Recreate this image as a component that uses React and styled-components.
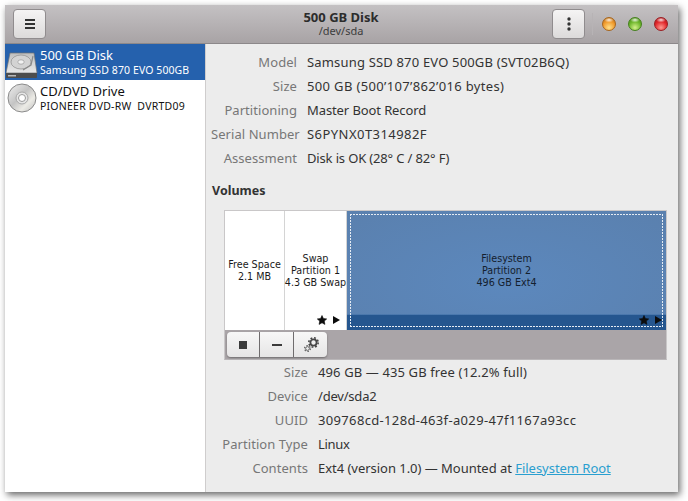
import React from "react";
import styled, { createGlobalStyle } from "styled-components";

const GlobalStyle = createGlobalStyle`
  html, body {
    margin: 0;
    padding: 0;
    background: #fff;
    width: 688px;
    height: 501px;
    overflow: hidden;
  }
  * { box-sizing: border-box; }
`;

const Page = styled.div`
  width: 688px;
  height: 501px;
  padding: 5px 10px 9px 5px;
  font-family: "Noto Sans", "Open Sans", sans-serif;
`;

const Window = styled.div`
  width: 673px;
  height: 487px;
  display: flex;
  flex-direction: column;
  background: #ececec;
  box-shadow: 2px 3px 7px rgba(0, 0, 0, 0.6);
`;

const TitleBar = styled.div`
  height: 39px;
  flex: none;
  display: flex;
  align-items: center;
  padding: 0 10px 1px 8px;
  background: linear-gradient(#c4c1c3, #a8a3a5);
  border-bottom: 1px solid #8c888a;
`;

const ToolButton = styled.div`
  width: 33px;
  height: 30px;
  flex: none;
  display: flex;
  align-items: center;
  justify-content: center;
  background: linear-gradient(#f5f4f4, #dcdada);
  border: 1px solid #908c8e;
  border-radius: 4px;
`;

const Title = styled.div`
  flex: 1;
  display: flex;
  flex-direction: column;
  align-items: center;
  padding-left: 84px;
  color: #2c2c2c;
`;

const TitleMain = styled.div`
  font-size: 13px;
  line-height: 14px;
  font-weight: 700;
`;

const TitleSub = styled.div`
  font-size: 11px;
  line-height: 13px;
  color: #3c3c3c;
`;

const Separator = styled.div`
  width: 1px;
  height: 22px;
  margin: 0 9px 0 7px;
  background: #b7b3b5;
`;

const Lights = styled.div`
  display: flex;
  gap: 12px;
`;

const Light = styled.div`
  width: 14px;
  height: 14px;
  border-radius: 50%;
  border: 1px solid ${(p) => p.$edge};
  background:
    radial-gradient(ellipse 40% 22% at 50% 16%, rgba(255, 255, 255, 0.85), transparent),
    radial-gradient(
      circle at 50% 80%,
      ${(p) => p.$glow} 0%,
      ${(p) => p.$color} 55%,
      ${(p) => p.$edge} 100%
    );
`;

const Body = styled.div`
  flex: 1;
  display: flex;
  min-height: 0;
`;

const Sidebar = styled.div`
  width: 201px;
  flex: none;
  background: #fff;
  border-right: 1px solid #cfcdcd;
`;

const DriveRow = styled.div`
  height: 36px;
  display: flex;
  align-items: center;
  gap: 2px;
  padding-left: 1px;
  background: ${(p) => (p.$selected ? "#2561ad" : "#fff")};
  color: ${(p) => (p.$selected ? "#fff" : "#111")};
`;

const DriveIcon = styled.svg`
  width: 32px;
  height: 32px;
  flex: none;
`;

const DriveText = styled.div`
  display: flex;
  flex-direction: column;
  white-space: pre;
`;

const DriveName = styled.div`
  font-size: 13px;
  line-height: 16px;
`;

const DriveModel = styled.div`
  font-size: 10.5px;
  line-height: 14px;
  letter-spacing: ${(p) => p.$track}px;
`;

const Content = styled.div`
  flex: 1;
  padding: 6px 12px 0 5px;
`;

const Info = styled.div`
  display: grid;
  grid-template-columns: ${(p) => p.$label}px 1fr;
  column-gap: 10px;
  grid-auto-rows: 24px;
  align-items: center;
  font-size: 13px;
  color: #333;
`;

const Label = styled.div`
  text-align: right;
  color: #777;
  white-space: nowrap;
  letter-spacing: 0.06px;
`;

const Value = styled.div`
  white-space: nowrap;
  letter-spacing: ${(p) => p.$track}px;
`;

const Link = styled.a`
  color: #2a9fd0;
  text-decoration: underline;
`;

const Heading = styled.div`
  margin: 12px 0 10px 1px;
  font-size: 12.5px;
  line-height: 18px;
  font-weight: 700;
  color: #333;
`;

const VolumeBox = styled.div`
  margin: 0 0 0 13px;
  width: 443px;
  height: 150px;
  display: flex;
  flex-direction: column;
  background: #aaa5a8;
  border: 1px solid #c9c7c8;
  border-bottom-color: #b9b6b8;
`;

const Partitions = styled.div`
  height: 119px;
  flex: none;
  display: flex;
  background: #fff;
`;

const Partition = styled.div`
  position: relative;
  width: ${(p) => p.$width}px;
  flex: none;
  display: flex;
  align-items: center;
  justify-content: center;
  text-align: center;
  font-family: "DejaVu Sans", sans-serif;
  font-size: 9.6px;
  line-height: 12px;
  white-space: nowrap;
  color: #1a1a1a;
  border-right: 1px solid #d4d4d4;
`;

const Selected = styled(Partition)`
  border-right: 0;
  background:
    linear-gradient(to top, #25568f 15px, #3a6ca5 15px, transparent 16px),
    radial-gradient(ellipse at 50% 60%, #5c88bd, #5a80ae);
  color: #14202e;
`;

const Focus = styled.div`
  position: absolute;
  inset: 3px;
  --dash-h: repeating-linear-gradient(90deg, #e6ecf3 0 2px, transparent 2px 3px);
  --dash-v: repeating-linear-gradient(0deg, #e6ecf3 0 2px, transparent 2px 3px);
  background:
    var(--dash-h) top / 100% 1px no-repeat,
    var(--dash-h) bottom / 100% 1px no-repeat,
    var(--dash-v) left / 1px 100% no-repeat,
    var(--dash-v) right / 1px 100% no-repeat;
`;

const Marks = styled.div`
  position: absolute;
  right: ${(p) => p.$right}px;
  bottom: 5px;
  display: flex;
  align-items: center;
  gap: 6px;
`;

const Mark = styled.svg`
  display: block;
  width: ${(p) => p.$size}px;
  height: 10px;
  fill: #0c0c0c;
`;

const VolumeBar = styled.div`
  flex: 1;
  display: flex;
  align-items: center;
  padding-left: 2px;
`;

const ActionGroup = styled.div`
  height: 25px;
  display: flex;
  border-radius: 4px;
  overflow: hidden;
  background: linear-gradient(#f7f7f7, #e6e5e5);
  box-shadow: 0 1px 2px rgba(0, 0, 0, 0.35);
`;

const Action = styled.div`
  width: ${(p) => p.$width}px;
  display: flex;
  align-items: center;
  justify-content: center;
  & + & {
    border-left: 1px solid #6f6c6d;
  }
`;

const StopGlyph = styled.div`
  width: 8px;
  height: 8px;
  background: #3b3b3b;
`;

const MinusGlyph = styled.div`
  width: 10px;
  height: 2px;
  background: #3b3b3b;
`;

const Star = () => (
  <Mark $size={10} viewBox="0 0 10 10">
    <path
      d="M5 .5l1.400 3 3.300.4-2.400 2.200.6 3.300L5 7.800 2.100 9.400l.6-3.300L.3 3.900l3.300-.4z"
      stroke="#0c0c0c"
      strokeWidth="0.6"
    />
  </Mark>
);

const Play = () => (
  <Mark $size={7} viewBox="0 0 7 10">
    <path d="M0 1l7 4-7 4z" />
  </Mark>
);

const Gears = () => (
  <svg width="16" height="16" viewBox="0 0 16 16">
    <g fill="none" stroke="#474747">
      <circle cx="10.500" cy="5.500" r="3.100" strokeWidth="1.800" />
      <circle cx="10.500" cy="5.500" r="4.700" strokeWidth="1.600" strokeDasharray="1.850 1.840" />
    </g>
    <g fill="none" stroke="#666">
      <circle cx="4.500" cy="11.500" r="1.900" strokeWidth="1" />
      <circle cx="4.500" cy="11.500" r="3" strokeWidth="1.200" strokeDasharray="1.570 1.570" />
    </g>
  </svg>
);

const DiskIcon = () => (
  <DriveIcon viewBox="0 0 32 32">
    <defs>
      <linearGradient id="diskTop" x1="0" y1="0" x2="0" y2="1">
        <stop offset="0" stopColor="#bfbfbf" />
        <stop offset="1" stopColor="#e9e9e9" />
      </linearGradient>
    </defs>
    <path d="M4 7h24l3 20H0z" fill="url(#diskTop)" stroke="#6f7174" strokeWidth="0.7" />
    <path d="M0 27h31v4a1 1 0 0 1-1 1H1a1 1 0 0 1-1-1z" fill="#4d4d4d" />
    <rect x="2" y="29" width="8" height="1.500" fill="#b9b9b9" />
    <ellipse cx="15" cy="16" rx="10" ry="7" fill="#d3d3d3" stroke="#8d8d8d" strokeWidth="0.7" />
    <ellipse cx="15" cy="16" rx="3.200" ry="2.200" fill="#f2f2f2" stroke="#8d8d8d" strokeWidth="0.6" />
    <path d="M27 10l-2 9-8 5" fill="none" stroke="#8a8a8a" strokeWidth="1.200" />
  </DriveIcon>
);

const DiscIcon = () => (
  <DriveIcon viewBox="0 0 32 32">
    <defs>
      <linearGradient id="discFace" x1="0" y1="0" x2="1" y2="1">
        <stop offset="0" stopColor="#f0f0f0" />
        <stop offset="0.45" stopColor="#c4c4c4" />
        <stop offset="0.7" stopColor="#ecebe6" />
        <stop offset="1" stopColor="#bcbcbc" />
      </linearGradient>
    </defs>
    <circle cx="16" cy="16" r="14" fill="url(#discFace)" stroke="#8b8b8b" />
    <circle cx="16" cy="16" r="6" fill="#e6e6e6" stroke="#a9a9a9" />
    <circle cx="16" cy="16" r="3.500" fill="#fff" stroke="#9a9a9a" />
  </DriveIcon>
);

const diskRows = [
  ["Model", "Samsung SSD 870 EVO 500GB (SVT02B6Q)", 0.175],
  ["Size", "500 GB (500’107’862’016 bytes)", 0.35],
  ["Partitioning", "Master Boot Record", -0.1],
  ["Serial Number", "S6PYNX0T314982F", 0.45],
  ["Assessment", "Disk is OK (28° C / 82° F)", -0.15],
];

const volumeRows = [
  ["Size", "496 GB — 435 GB free (12.2% full)", 0.12],
  ["Device", "/dev/sda2", -0.2],
  ["UUID", "309768cd-128d-463f-a029-47f1167a93cc", 0.34],
  ["Partition Type", "Linux", -0.28],
];

const App = () => {
  return (
    <Page>
      <GlobalStyle />
      <Window>
        <TitleBar>
          <ToolButton>
            <svg width="12" height="12" viewBox="0 0 12 12" fill="#333">
              <rect x="1" y="1" width="10" height="2" />
              <rect x="1" y="5" width="10" height="2" />
              <rect x="1" y="9" width="10" height="2" />
            </svg>
          </ToolButton>
          <Title>
            <TitleMain>500 GB Disk</TitleMain>
            <TitleSub>/dev/sda</TitleSub>
          </Title>
          <ToolButton>
            <svg width="4" height="14" viewBox="0 0 4 14" fill="#333">
              <circle cx="2" cy="2" r="1.700" />
              <circle cx="2" cy="7" r="1.700" />
              <circle cx="2" cy="12" r="1.700" />
            </svg>
          </ToolButton>
          <Separator />
          <Lights>
            <Light $color="#f09a2c" $glow="#ffe08a" $edge="#a8651a" />
            <Light $color="#6cb52a" $glow="#d3f08a" $edge="#44801c" />
            <Light $color="#e0262a" $glow="#ff9a90" $edge="#9c1c20" />
          </Lights>
        </TitleBar>
        <Body>
          <Sidebar>
            <DriveRow $selected>
              <DiskIcon />
              <DriveText>
                <DriveName>500 GB Disk</DriveName>
                <DriveModel $track={0.1}>Samsung SSD 870 EVO 500GB</DriveModel>
              </DriveText>
            </DriveRow>
            <DriveRow>
              <DiscIcon />
              <DriveText>
                <DriveName>CD/DVD Drive</DriveName>
                <DriveModel $track={0.23}>PIONEER DVD-RW  DVRTD09</DriveModel>
              </DriveText>
            </DriveRow>
          </Sidebar>
          <Content>
            <Info $label={86}>
              {diskRows.map(([label, value, track]) => (
                <React.Fragment key={label}>
                  <Label>{label}</Label>
                  <Value $track={track}>{value}</Value>
                </React.Fragment>
              ))}
            </Info>
            <Heading>Volumes</Heading>
            <VolumeBox>
              <Partitions>
                <Partition $width={60}>
                  <div>
                    Free Space
                    <br />
                    2.1 MB
                  </div>
                </Partition>
                <Partition $width={62}>
                  <div>
                    Swap
                    <br />
                    Partition 1
                    <br />
                    4.3 GB Swap
                  </div>
                  <Marks $right={6}>
                    <Star />
                    <Play />
                  </Marks>
                </Partition>
                <Selected $width={319}>
                  <Focus />
                  <div>
                    Filesystem
                    <br />
                    Partition 2
                    <br />
                    496 GB Ext4
                  </div>
                  <Marks $right={4}>
                    <Star />
                    <Play />
                  </Marks>
                </Selected>
              </Partitions>
              <VolumeBar>
                <ActionGroup>
                  <Action $width={32}>
                    <StopGlyph />
                  </Action>
                  <Action $width={34}>
                    <MinusGlyph />
                  </Action>
                  <Action $width={34}>
                    <Gears />
                  </Action>
                </ActionGroup>
              </VolumeBar>
            </VolumeBox>
            <Info $label={97}>
              {volumeRows.map(([label, value, track]) => (
                <React.Fragment key={label}>
                  <Label>{label}</Label>
                  <Value $track={track}>{value}</Value>
                </React.Fragment>
              ))}
              <Label>Contents</Label>
              <Value $track={-0.03}>
                Ext4 (version 1.0) — Mounted at <Link>Filesystem Root</Link>
              </Value>
            </Info>
          </Content>
        </Body>
      </Window>
    </Page>
  );
};

export default App;
